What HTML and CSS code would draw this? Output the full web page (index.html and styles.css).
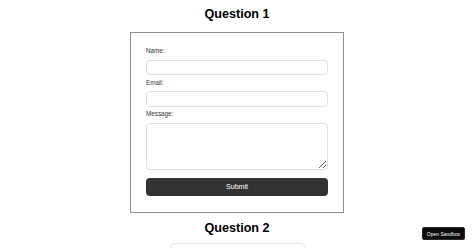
FILE: index.html
```html
<!DOCTYPE html>
<html lang="en">
<head>
<meta charset="utf-8">
<title>Questions</title>
<link rel="stylesheet" href="styles.css">
</head>
<body>
  <main class="page">
    <h1 class="title">Question 1</h1>
    <form class="card">
      <label class="label" for="name">Name:</label>
      <input class="field" id="name" type="text">
      <label class="label" for="email">Email:</label>
      <input class="field" id="email" type="email">
      <label class="label" for="msg">Message:</label>
      <textarea class="field area" id="msg"></textarea>
      <button class="submit" type="button">Submit</button>
    </form>
    <h1 class="title title-2">Question 2</h1>
    <div class="card-2"></div>
  </main>
  <button class="sandbox" type="button">Open Sandbox</button>
</body>
</html>
```

FILE: styles.css
```css
html, body {
  margin: 0;
  padding: 0;
  background: #fff;
  overflow: hidden;
}
body {
  font-family: "Liberation Sans", Arial, sans-serif;
  color: #111;
}
.page {
  display: flex;
  flex-direction: column;
  align-items: center;
}
.title {
  font-size: 12.6px;
  line-height: 15px;
  font-weight: bold;
  margin: 7px 0 10px;
  color: #000;
}
.title-2 {
  margin: 8px 0 7px;
}
.card {
  box-sizing: border-box;
  width: 214px;
  border: 1px solid #8f8f8f;
  padding: 14px 15px 16px;
  display: flex;
  flex-direction: column;
}
.label {
  display: block;
  font-size: 6.3px;
  line-height: 8px;
  font-weight: normal;
  color: #333;
  margin: 0 0 4.7px;
}
.field {
  display: block;
  box-sizing: border-box;
  width: 182px;
  height: 15.5px;
  margin: 0 0 3.5px;
  padding: 0 4px;
  border: 1px solid #e0e0e0;
  border-radius: 4px;
  background: #fff;
  font-family: inherit;
  font-size: 6px;
  outline: none;
}
.area {
  height: 47px;
  margin: 0;
  resize: vertical;
}
.submit {
  display: block;
  box-sizing: border-box;
  width: 182px;
  height: 17.7px;
  margin-top: 8px;
  border: none;
  border-radius: 4px;
  background: #333;
  color: #fff;
  font-family: inherit;
  font-size: 7.1px;
  padding: 0;
}
.card-2 {
  box-sizing: border-box;
  width: 135px;
  height: 5px;
  border: 1px solid #e6e6e6;
  border-bottom: none;
  border-radius: 6px 6px 0 0;
}
.sandbox {
  position: fixed;
  right: 9px;
  bottom: 8px;
  box-sizing: border-box;
  width: 43px;
  height: 13px;
  padding: 0;
  border: 1px solid #2a2a2a;
  border-radius: 2px;
  background: #0b0b0b;
  color: #fff;
  font-family: inherit;
  font-size: 5px;
}
```
